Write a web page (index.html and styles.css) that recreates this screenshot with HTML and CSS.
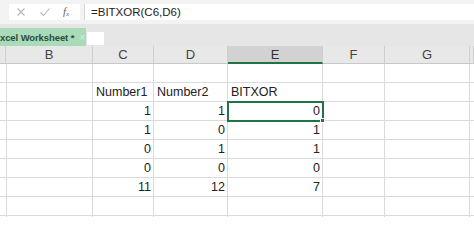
FILE: index.html
```html
<!DOCTYPE html>
<html>
<head>
<meta charset="utf-8">
<link rel="stylesheet" href="styles.css">
</head>
<body>
<div class="formula-row">
  <div class="fx-box">
    <svg class="ic" width="12" height="12" viewBox="0 0 12 12"><path d="M2.5 2.5 L9.5 9.5 M9.5 2.5 L2.5 9.5" stroke="#b5b5b5" stroke-width="1.1" fill="none"/></svg>
    <svg class="ic" width="12" height="12" viewBox="0 0 12 12"><path d="M1.5 6.5 L4.5 9.5 L10.5 2.5" stroke="#b5b5b5" stroke-width="1.1" fill="none"/></svg>
    <span class="fx">f<sub>x</sub></span>
  </div>
  <div class="formula-input">=BITXOR(C6,D6)</div>
</div>
<div class="tab-row">
  <div class="tab"><span class="tab-name">xcel Worksheet *</span><span class="tab-close">×</span></div>
  <div class="tab-box"></div>
</div>
<div class="grid">
  <div class="hd rh"></div><div class="hd">B</div><div class="hd">C</div><div class="hd">D</div><div class="hd sel">E</div><div class="hd">F</div><div class="hd">G</div><div class="hd"></div>

  <div class="c rh"></div><div class="c"></div><div class="c"></div><div class="c"></div><div class="c"></div><div class="c"></div><div class="c"></div><div class="c"></div>

  <div class="c rh"></div><div class="c"></div><div class="c t">Number1</div><div class="c t">Number2</div><div class="c t">BITXOR</div><div class="c"></div><div class="c"></div><div class="c"></div>

  <div class="c rh"></div><div class="c"></div><div class="c n">1</div><div class="c n">1</div><div class="c n active">0<span class="handle"></span></div><div class="c"></div><div class="c"></div><div class="c"></div>

  <div class="c rh"></div><div class="c"></div><div class="c n">1</div><div class="c n">0</div><div class="c n">1</div><div class="c"></div><div class="c"></div><div class="c"></div>

  <div class="c rh"></div><div class="c"></div><div class="c n">0</div><div class="c n">1</div><div class="c n">1</div><div class="c"></div><div class="c"></div><div class="c"></div>

  <div class="c rh"></div><div class="c"></div><div class="c n">0</div><div class="c n">0</div><div class="c n">0</div><div class="c"></div><div class="c"></div><div class="c"></div>

  <div class="c rh"></div><div class="c"></div><div class="c n">11</div><div class="c n">12</div><div class="c n">7</div><div class="c"></div><div class="c"></div><div class="c"></div>

  <div class="c rh"></div><div class="c"></div><div class="c"></div><div class="c"></div><div class="c"></div><div class="c"></div><div class="c"></div><div class="c"></div>

  <div class="c rh"></div><div class="c"></div><div class="c"></div><div class="c"></div><div class="c"></div><div class="c"></div><div class="c"></div><div class="c"></div>
</div>
</body>
</html>
```

FILE: styles.css
```css
* { box-sizing: border-box; }
html, body { margin: 0; padding: 0; background: #ffffff; overflow: hidden; }
body { width: 474px; height: 217px; font-family: "Liberation Sans", Arial, sans-serif; }

.formula-row {
  height: 24px;
  background: #f3f3f3;
  display: flex;
  align-items: flex-start;
  padding-top: 4px;
  padding-left: 9px;
  gap: 4px;
}
.fx-box {
  width: 71px;
  height: 16px;
  background: #ffffff;
  display: flex;
  align-items: center;
  padding-left: 6px;
  gap: 12px;
}
.ic { display: block; }
.fx {
  font-family: "Liberation Serif", serif;
  font-style: italic;
  font-size: 11px;
  color: #666;
  line-height: 1;
}
.fx sub { font-size: 7px; vertical-align: -1px; }
.formula-input {
  flex: 1;
  height: 16px;
  background: #ffffff;
  border-left: 1px solid #d6d6d6;
  font-size: 11.5px;
  color: #222;
  line-height: 16px;
  padding-left: 6px;
}

.tab-row {
  height: 22px;
  background: #e6e6e6;
  display: flex;
  align-items: flex-end;
  gap: 1px;
}
.tab {
  width: 86px;
  height: 18px;
  background: #a9dbb8;
  display: flex;
  align-items: center;
  font-size: 9.5px;
  font-weight: bold;
  color: #2f4a38;
  white-space: nowrap;
  padding-left: 0;
}
.tab-name { letter-spacing: -0.1px; }
.tab-close { color: #d3ecdb; font-weight: normal; margin-left: 5px; font-size: 10px; }
.tab-box {
  width: 17px;
  height: 13px;
  background: #ffffff;
  margin-bottom: 1px;
}

.grid {
  display: grid;
  grid-template-columns: 6px 87px 61px 74px 95px 62px 85px 4px;
  grid-template-rows: 18px repeat(9, 19px);
}
.hd {
  background: #e8e8e8;
  border-right: 1px solid #cfcfcf;
  border-bottom: 1px solid #c8c8c8;
  text-align: center;
  font-size: 13px;
  color: #444;
  line-height: 18px;
}
.hd.sel {
  background: #d2d2d2;
  border-bottom: 2px solid #217346;
  color: #333;
}
.c {
  border-right: 1px solid #dadada;
  border-bottom: 1px solid #dadada;
  font-size: 12.5px;
  color: #222;
  line-height: 19px;
  padding: 0 3px;
  white-space: nowrap;
  position: relative;
}
.c.t { text-align: left; padding-left: 3px; }
.c.n { text-align: right; padding-right: 2px; }
.c.active {
  outline: 2px solid #217346;
  outline-offset: -1px;
  z-index: 1;
}
.handle {
  position: absolute;
  right: -3px;
  bottom: -3px;
  width: 5px;
  height: 5px;
  background: #217346;
  border: 1px solid #fff;
}
```
